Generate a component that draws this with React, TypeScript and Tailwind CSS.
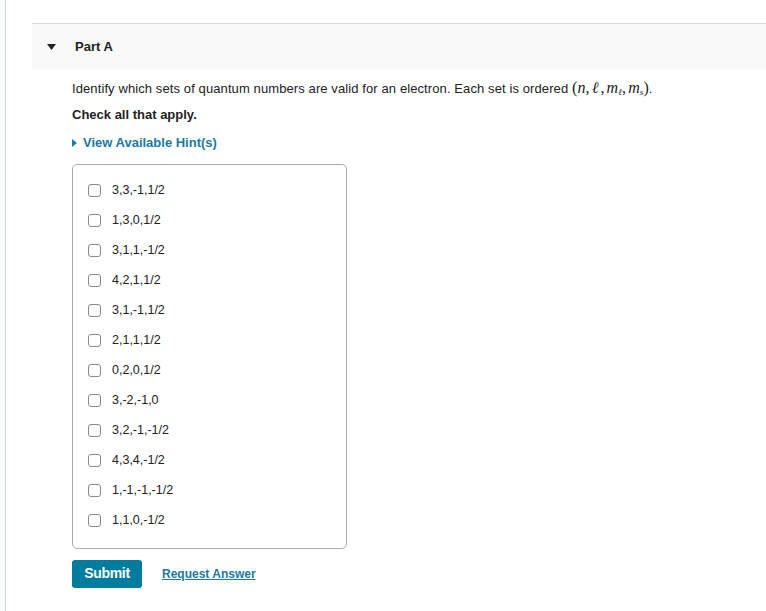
const options = [
  '3,3,-1,1/2',
  '1,3,0,1/2',
  '3,1,1,-1/2',
  '4,2,1,1/2',
  '3,1,-1,1/2',
  '2,1,1,1/2',
  '0,2,0,1/2',
  '3,-2,-1,0',
  '3,2,-1,-1/2',
  '4,3,4,-1/2',
  '1,-1,-1,-1/2',
  '1,1,0,-1/2',
];

export default function App() {
  return (
    <div className="min-h-[611px] bg-white font-['Liberation_Sans',Arial,sans-serif] text-[13px] text-[#222]">
      <div className="ml-[5px] min-h-[611px] border-l border-[#c9d7e6] pt-[23px]">
        <div className="ml-[26px] flex h-[46px] items-center border-t border-[#dcdcdc] bg-[#f9f9f9] pl-[15px]">
          <svg width="9" height="6" viewBox="0 0 9 6" className="mr-[19px]">
            <path d="M0 0 H9 L4.5 6 Z" fill="#222" />
          </svg>
          <span className="text-[13px] font-bold text-[#222]">Part A</span>
        </div>

        <div className="ml-[66px] pt-[11px]">
          <p className="leading-[18px] tracking-[0.1px]">
            Identify which sets of quantum numbers are valid for an electron. Each set is ordered{' '}
            <span className="font-['Liberation_Serif',serif] text-[16px] leading-[16px]">
              (<i>n</i>,<i className="mx-[2px]">ℓ</i>,<i className="ml-[2px]">m</i>
              <sub className="text-[9px] italic">ℓ</sub>,<i className="ml-[2px]">m</i>
              <sub className="text-[9px] italic">s</sub>)
            </span>
            .
          </p>
          <p className="mt-[8px] font-bold leading-[18px]">Check all that apply.</p>
          <button className="mt-[9px] flex items-center gap-[6px] font-bold text-[#1a7aa0]">
            <svg width="5" height="8" viewBox="0 0 5 8">
              <path d="M0 0 L5 4 L0 8 Z" fill="#1a7aa0" />
            </svg>
            View Available Hint(s)
          </button>

          <div className="mt-[11px] w-[275px] rounded-[5px] border border-[#ababab] pb-[12px] pt-[11px]">
            {options.map((o) => (
              <label key={o} className="flex h-[30px] items-center pl-[15px]">
                <span className="h-[13px] w-[13px] rounded-[3px] border border-[#8a8a8a] bg-white" />
                <span className="ml-[11px] text-[12.5px] text-[#222]">{o}</span>
              </label>
            ))}
          </div>

          <div className="mt-[11px] flex items-center">
            <button className="h-[28px] w-[70px] rounded-[3px] bg-[#007c9e] text-[14px] font-bold tracking-[-0.3px] text-white">
              Submit
            </button>
            <a className="ml-[20px] text-[12px] font-bold text-[#1a7aa0] underline">Request Answer</a>
          </div>
        </div>
      </div>
    </div>
  );
}
